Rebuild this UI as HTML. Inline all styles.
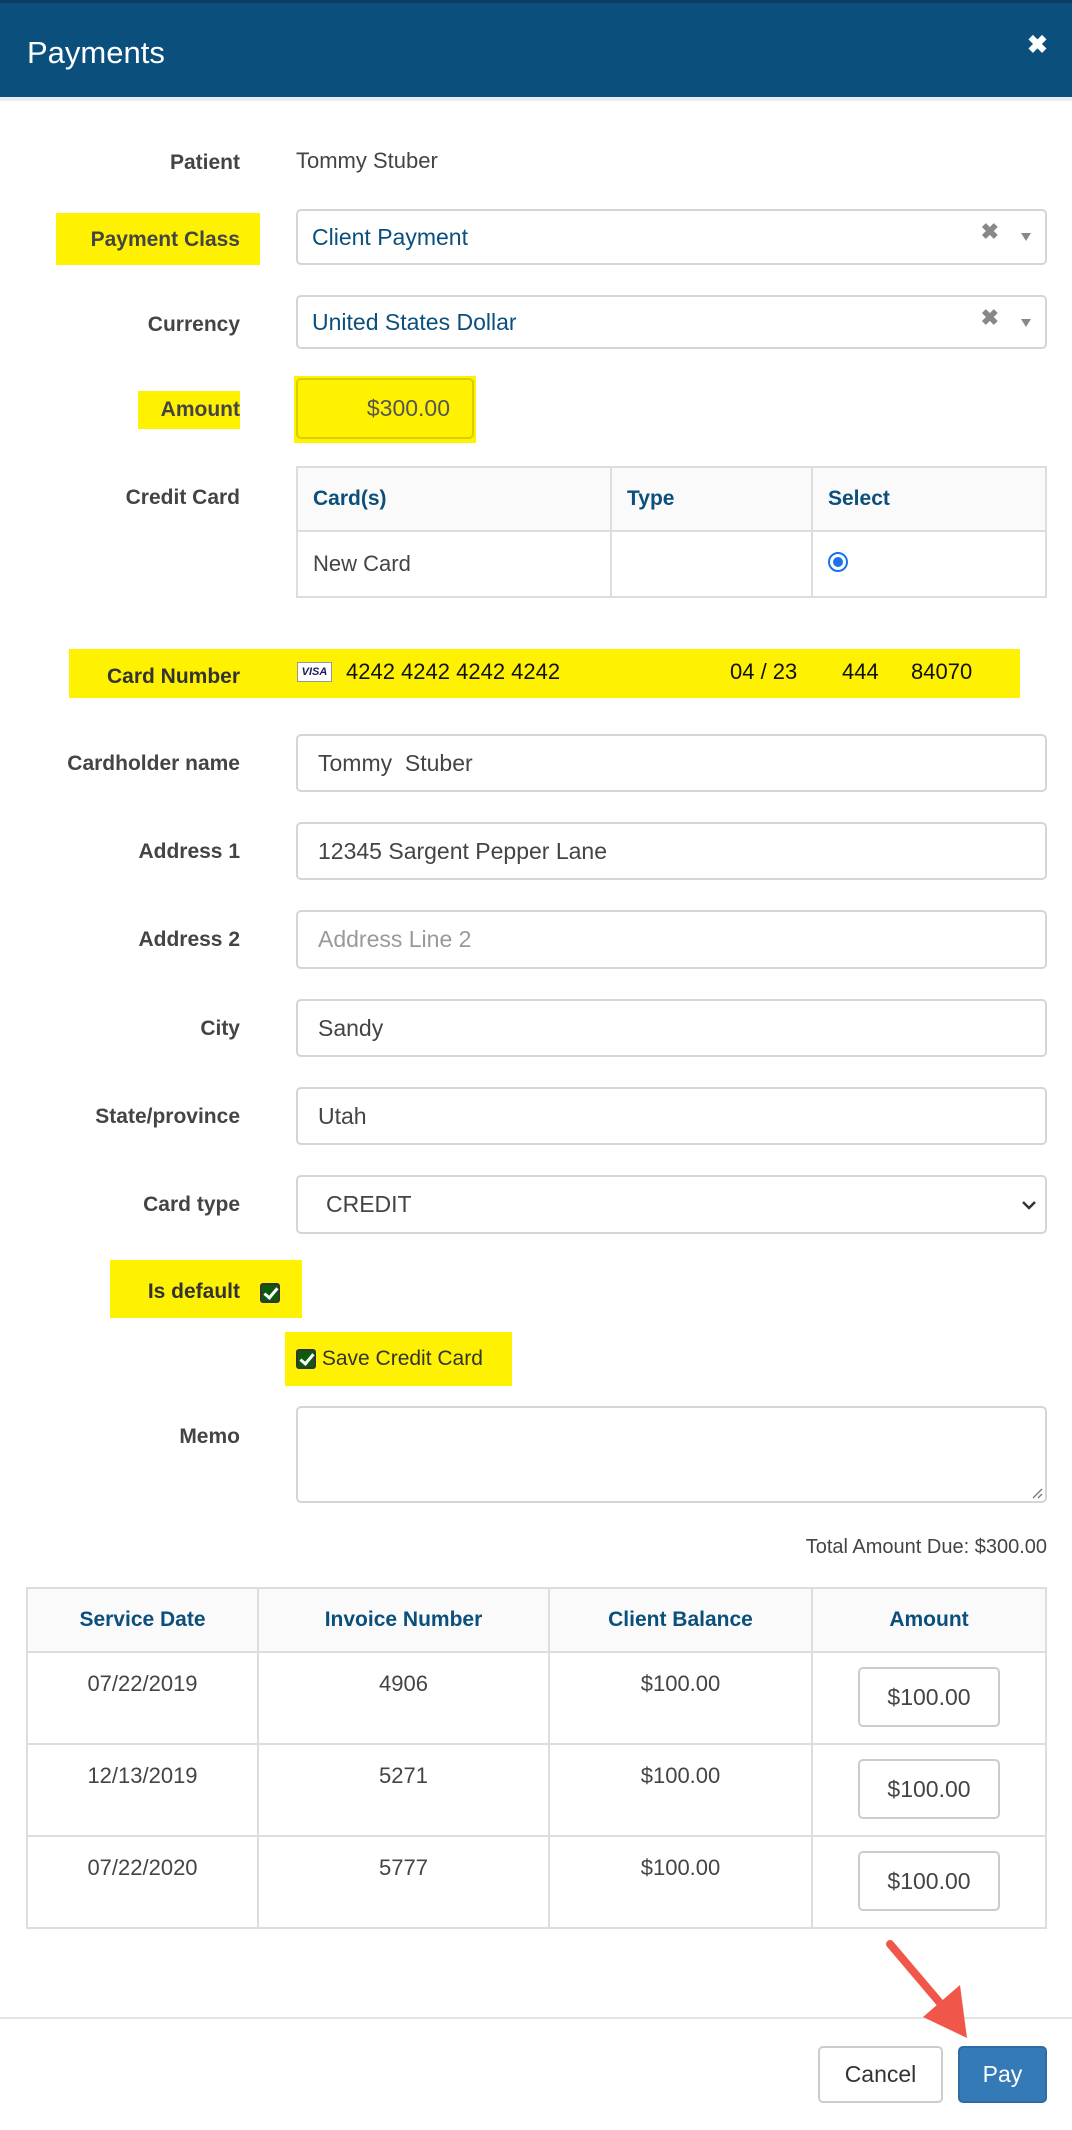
<!DOCTYPE html>
<html><head><meta charset="utf-8"><style>
*{box-sizing:border-box;margin:0;padding:0}
body{width:1072px;height:2130px;position:relative;background:#fff;font-family:"Liberation Sans",Arial,sans-serif;color:#333;overflow:hidden}
.a{position:absolute}
.hdr{left:0;top:0;width:1072px;height:101px;background:#0b507d;border-top:3px solid #0a3d60;border-bottom:4px solid #e8edf1}
.lbl{position:absolute;right:832px;font-weight:bold;font-size:21px;color:#444;text-align:right;white-space:nowrap}
.hl{background:#fff200}
.inp{position:absolute;left:296px;width:751px;border:2px solid #d5d5d5;border-radius:5px;background:#fff;font-size:23px;color:#444;padding-left:20px;display:flex;align-items:center}
.sel{color:#0b4f7c;padding-left:14px}
.x{position:absolute;right:46px;top:8px;color:#888;font-size:22px;font-weight:bold}
.dd{position:absolute;right:14px;top:22px;width:0;height:0;border-left:5px solid transparent;border-right:5px solid transparent;border-top:8px solid #888}
table{border-collapse:collapse}
td,th{border:2px solid #ddd}
th{color:#0b4f7c;font-size:21px;background:#fafafa}
.cb{display:inline-block;width:20px;height:20px;background:#0d5c0d;border:2px solid #333;border-radius:3px;position:relative;vertical-align:middle}
.cb:after{content:"";position:absolute;left:5px;top:0px;width:5px;height:11px;border:solid #fff;border-width:0 3px 3px 0;transform:rotate(40deg)}
.ai{display:inline-block;width:142px;height:60px;border:2px solid #ccc;border-radius:5px;line-height:56px;font-size:23px;color:#444}
</style></head><body>
<div class="a hdr"></div>
<div class="a" style="left:27px;top:35px;font-size:31px;color:#fff">Payments</div>
<div class="a" style="left:1027px;top:30px;font-size:25px;color:#fff;font-weight:bold">✖</div>

<div class="lbl" style="top:151px">Patient</div>
<div class="a" style="left:296px;top:148px;font-size:22px;color:#444">Tommy Stuber</div>

<div class="a hl" style="left:56px;top:213px;width:204px;height:52px"></div>
<div class="lbl" style="top:228px">Payment Class</div>
<div class="inp sel" style="top:209px;height:56px"><span style="color:#0b4f7c">Client Payment</span><span class="x">✖</span><span class="dd"></span></div>

<div class="lbl" style="top:313px">Currency</div>
<div class="inp sel" style="top:295px;height:54px"><span style="color:#0b4f7c">United States Dollar</span><span class="x">✖</span><span class="dd"></span></div>

<div class="a hl" style="left:138px;top:391px;width:102px;height:38px"></div>
<div class="lbl" style="top:398px">Amount</div>
<div class="a hl" style="left:294px;top:376px;width:182px;height:67px"></div>
<div class="a" style="left:296px;top:378px;width:178px;height:61px;border:2px solid #d8cf00;border-radius:5px;font-size:23px;color:#555;text-align:right;padding-right:22px;line-height:57px">$300.00</div>

<div class="lbl" style="top:486px">Credit Card</div>
<table class="a" style="left:296px;top:466px;width:751px">
<tr style="height:64px"><th style="text-align:left;padding-left:15px;width:314px">Card(s)</th><th style="text-align:left;padding-left:15px;width:201px">Type</th><th style="text-align:left;padding-left:15px">Select</th></tr>
<tr style="height:66px"><td style="padding-left:15px;font-size:22px;color:#444">New Card</td><td></td><td style="padding-left:15px"><span style="display:inline-block;width:20px;height:20px;border-radius:50%;border:2px solid #1a73e8;position:relative"><span style="position:absolute;left:3px;top:3px;width:10px;height:10px;border-radius:50%;background:#1a73e8"></span></span></td></tr>
</table>

<div class="a hl" style="left:69px;top:649px;width:951px;height:49px"></div>
<div class="lbl" style="top:665px;color:#333">Card Number</div>
<div class="a" style="left:297px;top:662px;width:35px;height:20px;border:1px solid #999;background:#fff;font-size:11px;font-weight:bold;font-style:italic;color:#1a1a5e;text-align:center;line-height:18px">VISA</div>
<div class="a" style="left:346px;top:659px;font-size:22px;color:#111">4242 4242 4242 4242</div>
<div class="a" style="left:730px;top:659px;font-size:22px;color:#111">04 / 23</div>
<div class="a" style="left:842px;top:659px;font-size:22px;color:#111">444</div>
<div class="a" style="left:911px;top:659px;font-size:22px;color:#111">84070</div>

<div class="lbl" style="top:752px">Cardholder name</div>
<div class="inp" style="top:734px;height:58px">Tommy&nbsp; Stuber</div>
<div class="lbl" style="top:840px">Address 1</div>
<div class="inp" style="top:822px;height:58px">12345 Sargent Pepper Lane</div>
<div class="lbl" style="top:928px">Address 2</div>
<div class="inp" style="top:910px;height:59px;color:#999">Address Line 2</div>
<div class="lbl" style="top:1017px">City</div>
<div class="inp" style="top:999px;height:58px">Sandy</div>
<div class="lbl" style="top:1105px">State/province</div>
<div class="inp" style="top:1087px;height:58px">Utah</div>
<div class="lbl" style="top:1193px">Card type</div>
<div class="inp" style="top:1175px;height:59px;padding-left:28px">CREDIT<svg style="position:absolute;right:8px;top:22px" width="16" height="12" viewBox="0 0 16 12"><path d="M2 3l6 6 6-6" stroke="#333" stroke-width="2.5" fill="none"/></svg></div>

<div class="a hl" style="left:110px;top:1260px;width:192px;height:58px"></div>
<div class="lbl" style="top:1280px;color:#333">Is default</div>
<div class="a" style="left:260px;top:1283px"><span class="cb"></span></div>

<div class="a hl" style="left:285px;top:1332px;width:227px;height:54px"></div>
<div class="a" style="left:296px;top:1347px;font-size:21px;color:#333"><span class="cb"></span> Save Credit Card</div>

<div class="lbl" style="top:1425px">Memo</div>
<div class="inp" style="top:1406px;height:97px"><svg style="position:absolute;right:2px;bottom:2px" width="12" height="12"><path d="M11 2L2 11M11 7L7 11" stroke="#777" stroke-width="1.3"/></svg></div>

<div class="a" style="right:25px;top:1536px;font-size:20px;color:#444">Total Amount Due: $300.00</div>

<table class="a" style="left:26px;top:1587px;width:1021px;text-align:center;font-size:22px;color:#444">
<tr style="height:64px"><th style="width:231px">Service Date</th><th style="width:291px">Invoice Number</th><th style="width:263px">Client Balance</th><th>Amount</th></tr>
<tr style="height:92px;vertical-align:top"><td style="padding-top:18px">07/22/2019</td><td style="padding-top:18px">4906</td><td style="padding-top:18px">$100.00</td><td style="padding-top:14px"><span class="ai">$100.00</span></td></tr>
<tr style="height:92px;vertical-align:top"><td style="padding-top:18px">12/13/2019</td><td style="padding-top:18px">5271</td><td style="padding-top:18px">$100.00</td><td style="padding-top:14px"><span class="ai">$100.00</span></td></tr>
<tr style="height:92px;vertical-align:top"><td style="padding-top:18px">07/22/2020</td><td style="padding-top:18px">5777</td><td style="padding-top:18px">$100.00</td><td style="padding-top:14px"><span class="ai">$100.00</span></td></tr>
</table>

<div class="a" style="left:0;top:2017px;width:1072px;height:2px;background:#e5e5e5"></div>
<div class="a" style="left:818px;top:2046px;width:125px;height:57px;border:2px solid #ccc;border-radius:5px;text-align:center;line-height:53px;font-size:23px;color:#333">Cancel</div>
<div class="a" style="left:958px;top:2046px;width:89px;height:57px;background:#337ab7;border:2px solid #2e6da4;border-radius:5px;text-align:center;line-height:53px;font-size:23px;color:#fff">Pay</div>
<svg class="a" style="left:880px;top:1940px" width="110" height="110" viewBox="0 0 110 110"><path d="M10 4L66 70" stroke="#f0574a" stroke-width="8" stroke-linecap="round"/><path d="M43 77L87 98L80 45Z" fill="#f0574a"/></svg>
</body></html>
